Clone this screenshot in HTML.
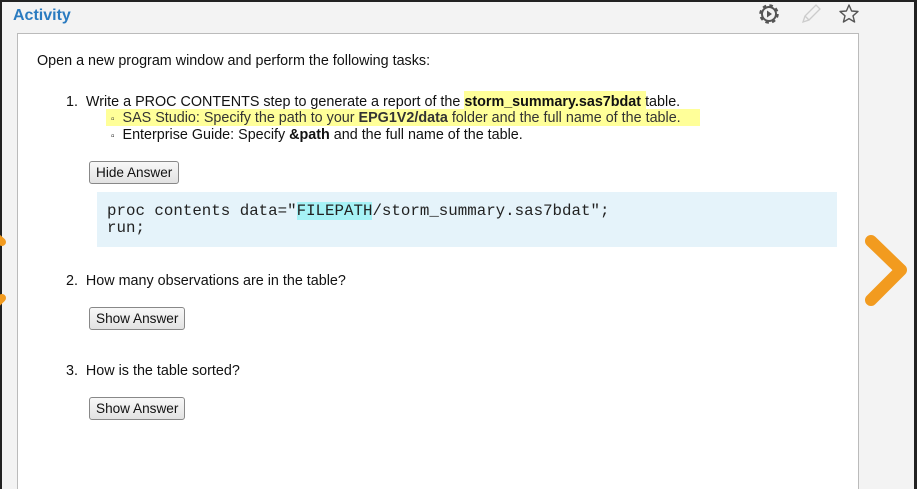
<!DOCTYPE html>
<html style="width:917px;height:489px;overflow:hidden"><head><style>
body{margin:0;width:917px;height:489px;overflow:hidden;background:#f3f3f3;font-family:"Liberation Sans",Arial,sans-serif;position:relative}
.frame{position:absolute;left:0;top:0;width:912px;height:489px;border:2px solid #222;border-bottom:none;border-right:3px solid #222;box-sizing:content-box}
.title{position:absolute;left:13px;top:7px;font-size:16px;font-weight:bold;color:#2a7bc0}
.box{position:absolute;left:17px;top:33px;width:840px;height:456px;background:#fff;border:1px solid #bbb;border-bottom:none}
.t{position:absolute;font-size:14.35px;color:#111;white-space:nowrap}
.btn{position:absolute;height:21px;border:1px solid #888;border-radius:3px;background:linear-gradient(#f8f8f8,#e2e2e2);font-size:13.6px;line-height:21px;padding:0 6px;color:#111}
.hl{background:#ffff99}
.code{position:absolute;left:97px;top:192px;width:740px;height:55px;background:#e5f3fa}
.mono{position:absolute;font-family:"Liberation Mono",monospace;font-size:15.8px;line-height:17px;color:#222;white-space:pre}
</style></head><body>
<div class="frame"></div>
<div class="title">Activity</div>
<svg style="position:absolute;left:757px;top:2px" width="24" height="24" viewBox="0 0 24 24"><circle cx="12" cy="12" r="8" fill="none" stroke="#555" stroke-width="3.5" stroke-dasharray="3.3 3"/><circle cx="12" cy="12" r="7" fill="none" stroke="#555" stroke-width="2"/><path d="M10 8.5 L15 12 L10 15.5Z" fill="#555"/></svg>
<svg style="position:absolute;left:800px;top:3px" width="22" height="22" viewBox="0 0 22 22"><path d="M3 19 L5 13 L16 2 L20 6 L9 17Z M5 13 L9 17" fill="none" stroke="#ccc" stroke-width="1.3"/></svg>
<svg style="position:absolute;left:838px;top:3px" width="22" height="22" viewBox="0 0 22 22"><path d="M11 2 L13.6 8 L20 8.5 L15 12.8 L16.6 19 L11 15.6 L5.4 19 L7 12.8 L2 8.5 L8.4 8Z" fill="none" stroke="#555" stroke-width="1.4" stroke-linejoin="round"/></svg>
<div class="box"></div>
<div class="t" style="left:37px;top:53px">Open a new program window and perform the following tasks:</div>
<div class="hl" style="position:absolute;left:464px;top:91px;width:182px;height:19px"></div>
<div class="t" style="left:66px;top:94px">1.&nbsp; Write a PROC CONTENTS step to generate a report of the <b>storm_summary.sas7bdat</b> table.</div>
<div class="hl" style="position:absolute;left:106px;top:109px;width:594px;height:17px"></div>
<div class="t" style="left:111px;top:110px;color:#333"><span style="font-size:10px">▫</span>&nbsp; SAS Studio: Specify the path to your <b>EPG1V2/data</b> folder and the full name of the table.</div>
<div class="t" style="left:111px;top:127px"><span style="font-size:10px">▫</span>&nbsp; Enterprise Guide: Specify <b>&amp;path</b> and the full name of the table.</div>
<div class="btn" style="left:89px;top:161px">Hide Answer</div>
<div class="code"></div>
<div class="mono" style="left:107px;top:203px">proc contents data="<span style="background:#a6f2f6">FILEPATH</span>/storm_summary.sas7bdat";
run;</div>
<div class="t" style="left:66px;top:273px">2.&nbsp; How many observations are in the table?</div>
<div class="btn" style="left:89px;top:307px">Show Answer</div>
<div class="t" style="left:66px;top:363px">3.&nbsp; How is the table sorted?</div>
<div class="btn" style="left:89px;top:397px">Show Answer</div>
<svg style="position:absolute;left:855px;top:228px" width="62" height="90"><path d="M16 13 L46 42 L16 72" fill="none" stroke="#f29b1f" stroke-width="12" stroke-linecap="round" stroke-linejoin="round"/></svg>
<svg style="position:absolute;left:0;top:228px" width="10" height="90"><path d="M-8 5 L2 14 M2 70 L-8 80" fill="none" stroke="#f29b1f" stroke-width="8" stroke-linecap="round"/></svg>
</body></html>
